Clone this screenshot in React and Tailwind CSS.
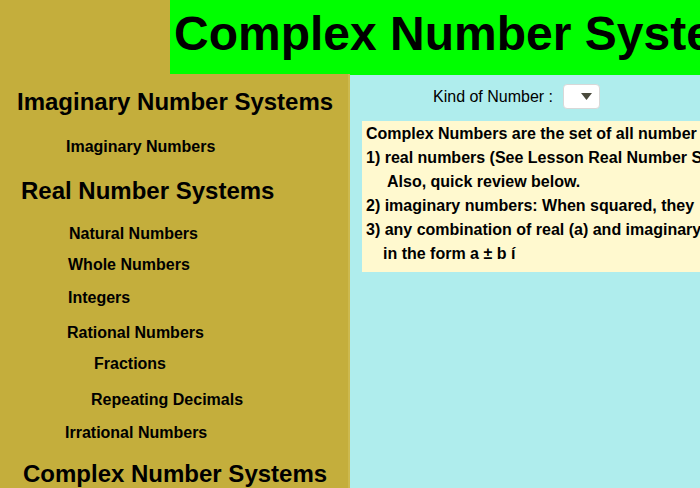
const sideItems = [
  { label: "Imaginary Number Systems", big: true, ml: "ml-[17px]", mt: "mt-[14px]" },
  { label: "Imaginary Numbers", ml: "ml-[66px]", mt: "mt-[21px]" },
  { label: "Real Number Systems", big: true, ml: "ml-[21px]", mt: "mt-[20px]" },
  { label: "Natural Numbers", ml: "ml-[69px]", mt: "mt-[19px]" },
  { label: "Whole Numbers", ml: "ml-[68px]", mt: "mt-[11px]" },
  { label: "Integers", ml: "ml-[68px]", mt: "mt-[13px]" },
  { label: "Rational Numbers", ml: "ml-[67px]", mt: "mt-[15px]" },
  { label: "Fractions", ml: "ml-[94px]", mt: "mt-[11px]" },
  { label: "Repeating Decimals", ml: "ml-[91px]", mt: "mt-[16px]" },
  { label: "Irrational Numbers", ml: "ml-[65px]", mt: "mt-[13px]" },
  { label: "Complex Number Systems", big: true, ml: "ml-[23px]", mt: "mt-[17px]" },
];

const lines = [
  { text: "Complex Numbers are the set of all number", indent: "" },
  { text: "1) real numbers (See Lesson Real Number Systems)", indent: "" },
  { text: "Also, quick review below.", indent: "pl-[21px]" },
  { text: "2) imaginary numbers: When squared, they", indent: "" },
  { text: "3) any combination of real (a) and imaginary (b i) numbers", indent: "" },
  { text: "in the form a ± b í", indent: "pl-[17px]" },
];

export default function App() {
  return (
    <div className="w-[700px] h-[488px] overflow-hidden flex bg-[#afeded] font-['Liberation_Sans',Arial,sans-serif] text-black">
      {/* sidebar */}
      <div className="w-[350px] shrink-0 flex flex-col">
        <div className="h-[75px] flex">
          <div className="w-[170px] shrink-0 bg-[#c4ae3c]" />
          <div className="flex-1 bg-[#00ff00]" />
        </div>
        <nav className="flex-1 bg-[#c4ae3c] border-r-2 border-[#cdb94e] w-[350px] flex flex-col items-start">
          {sideItems.map((it) => (
            <div
              key={it.label}
              className={`${it.ml} ${it.mt} font-bold whitespace-nowrap ${
                it.big ? "text-[24px] leading-[28px]" : "text-[16px] leading-[20px]"
              }`}
            >
              {it.label}
            </div>
          ))}
        </nav>
      </div>

      {/* main */}
      <div className="flex-1 min-w-0 flex flex-col">
        <header className="h-[75px] bg-[#00ff00] shrink-0 overflow-visible">
          <h1 className="-ml-[176px] pt-[6px] text-[48px] leading-[56px] font-bold whitespace-nowrap">
            Complex Number Systems
          </h1>
        </header>
        <div className="flex items-center h-[42px] pt-[1px] pl-[83px]">
          <span className="text-[16px] leading-[20px]">Kind of Number :</span>
          <div className="ml-[10px] w-[37px] h-[25px] bg-white border border-[#d8d8d8] rounded-[4px] flex items-center justify-end pr-[7px]">
            <svg width="11" height="8" viewBox="0 0 11 8">
              <path d="M0 0 L11 0 L5.5 7 Z" fill="#4a4a3c" />
            </svg>
          </div>
        </div>
        <div className="ml-[12px] mt-[4px] w-[420px] bg-[#fff9cf] pt-[1px] pb-[6px] pl-[4px]">
          {lines.map((l) => (
            <div
              key={l.text}
              className={`${l.indent} text-[16px] leading-[24px] font-bold whitespace-nowrap`}
            >
              {l.text}
            </div>
          ))}
        </div>
      </div>
    </div>
  );
}
